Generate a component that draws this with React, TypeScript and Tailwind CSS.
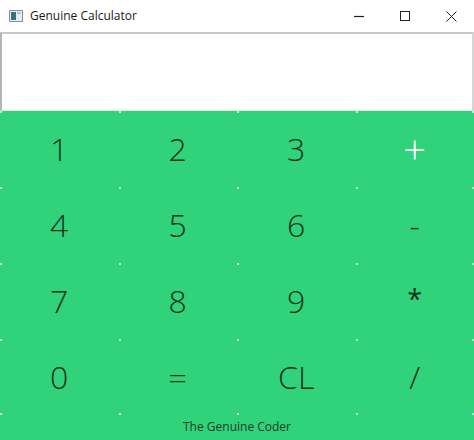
import React from "react";

const keys: { label: string; white?: boolean }[] = [
  { label: "1" }, { label: "2" }, { label: "3" }, { label: "+", white: true },
  { label: "4" }, { label: "5" }, { label: "6" }, { label: "-" },
  { label: "7" }, { label: "8" }, { label: "9" }, { label: "*" },
  { label: "0" }, { label: "=" }, { label: "CL" }, { label: "/" },
];

function Key({ label, white, idx }: { label: string; white?: boolean; idx: number }) {
  const lastCol = idx % 4 === 3;
  const lastRow = idx >= 12;
  let cls = "text-[32px] font-light leading-none text-[#15321f]";
  if (white) cls = "text-[40px] font-light leading-none text-white";
  else if (label === "*") cls = "text-[27px] font-normal leading-none text-[#15321f] -mt-[6px]";
  return (
    <div className="relative flex items-center justify-center">
      <span className={cls} style={{ fontFamily: '"Open Sans", "Noto Sans", sans-serif' }}>
        {label}
      </span>
      <span className="absolute left-0 top-0 h-[2px] w-[2px] bg-white/70" />
      {lastCol && <span className="absolute right-0 top-0 h-[2px] w-[2px] bg-white/70" />}
      {lastRow && <span className="absolute left-0 bottom-0 h-[2px] w-[2px] bg-white/70" />}
      {lastRow && lastCol && <span className="absolute right-0 bottom-0 h-[2px] w-[2px] bg-white/70" />}
    </div>
  );
}

export default function App() {
  return (
    <div
      className="flex h-[440px] w-[474px] flex-col overflow-hidden bg-white"
      style={{ fontFamily: '"Open Sans", "Noto Sans", sans-serif' }}
    >
      {/* Title bar */}
      <div className="flex h-[32px] items-center bg-white">
        <svg width="14" height="12" viewBox="0 0 14 12" className="ml-[9px]">
          <rect x="0.5" y="0.5" width="13" height="11" fill="#e8ecef" stroke="#8a9299" />
          <rect x="2" y="2" width="5" height="8" fill="#3b6f7a" />
          <rect x="8" y="2" width="4" height="2" fill="#b8c2c8" />
        </svg>
        <span className="ml-[7px] text-[12px] text-[#1a1a1a]">Genuine Calculator</span>
        <div className="ml-auto flex h-full items-center">
          <div className="flex h-full w-[46px] items-center justify-center">
            <svg width="10" height="10" viewBox="0 0 10 10">
              <line x1="0" y1="5.5" x2="10" y2="5.5" stroke="#222" strokeWidth="1.2" />
            </svg>
          </div>
          <div className="flex h-full w-[46px] items-center justify-center">
            <svg width="10" height="10" viewBox="0 0 10 10">
              <rect x="0.5" y="0.5" width="9" height="9" fill="none" stroke="#222" strokeWidth="1" />
            </svg>
          </div>
          <div className="flex h-full w-[46px] items-center justify-center">
            <svg width="11" height="11" viewBox="0 0 11 11">
              <path d="M0.5 0.5 L10.5 10.5 M10.5 0.5 L0.5 10.5" stroke="#222" strokeWidth="1" />
            </svg>
          </div>
        </div>
      </div>

      {/* Display */}
      <div className="h-[79px] border-l-2 border-r-2 border-t-2 border-b border-l-[#b5b5b5] border-r-[#d5d5d5] border-t-[#c8c8c8] border-b-[#e5e5e5] bg-white" />

      {/* Keypad */}
      <div className="flex flex-1 flex-col bg-[#30d27a]">
        <div className="grid h-[304px] grid-cols-4 grid-rows-4">
          {keys.map((k, i) => (
            <Key key={k.label} label={k.label} white={k.white} idx={i} />
          ))}
        </div>
        <div className="flex flex-1 items-center justify-center pb-[2px]">
          <span className="text-[12px] text-[#1d3b2c]">The Genuine Coder</span>
        </div>
      </div>
    </div>
  );
}
